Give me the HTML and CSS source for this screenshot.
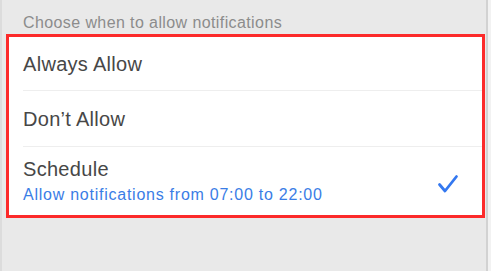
FILE: index.html
```html
<!DOCTYPE html>
<html>
<head>
<meta charset="utf-8">
<link rel="stylesheet" href="styles.css">
</head>
<body>
<div class="screen">
  <div class="edge"></div>
  <div class="main">
    <div class="header">Choose when to allow notifications</div>
    <div class="card">
      <div class="row row-first">
        <span class="title">Always Allow</span>
      </div>
      <div class="row">
        <span class="title">Don’t Allow</span>
      </div>
      <div class="row row-last">
        <div class="texts">
          <span class="title">Schedule</span>
          <span class="sub">Allow notifications from 07:00 to 22:00</span>
        </div>
        <svg class="check" width="22" height="20" viewBox="0 0 22 20">
          <path d="M2.5 10.5 L8 17 L19.5 2.5" fill="none" stroke="#3478f0" stroke-width="2.8" stroke-linecap="round" stroke-linejoin="round"/>
        </svg>
      </div>
    </div>
  </div>
  <div class="scroll"></div>
</div>
</body>
</html>
```
FILE: styles.css
```css
html, body {
  margin: 0;
  padding: 0;
}
body {
  background: #e9e9e9;
  font-family: "Liberation Sans", Arial, sans-serif;
}
.screen {
  display: flex;
  width: 491px;
  height: 271px;
  background: #e9e9e9;
}
.edge {
  width: 2px;
  background: #dcdcdc;
  flex: none;
}
.main {
  width: 479px;
  padding-left: 4px;
  padding-right: 1px;
  flex: none;
}
.header {
  padding: 13px 0 1px 17px;
  font-size: 16px;
  line-height: 20px;
  letter-spacing: 0.4px;
  color: #8c8c8c;
}
.card {
  border: 3px solid #fc2a2a;
  background: #ffffff;
  width: 473px;
}
.row {
  margin-left: 14px;
  border-top: 1px solid #eeeeee;
  display: flex;
  align-items: center;
  height: 55px;
}
.row-first {
  border-top: none;
  height: 53px;
}
.row-last {
  height: 68px;
  justify-content: space-between;
  padding-right: 23px;
}
.title {
  font-size: 20px;
  line-height: 24px;
  letter-spacing: 0.3px;
  color: #474747;
}
.texts {
  display: flex;
  flex-direction: column;
}
.sub {
  font-size: 16px;
  line-height: 20px;
  letter-spacing: 0.75px;
  color: #3a7de6;
  margin-top: 4px;
}
.check {
  display: block;
  margin-top: 6px;
}
.scroll {
  width: 2px;
  background: #d2d2d2;
  flex: none;
}
.screen::after {
  content: "";
  display: block;
  width: 3px;
  background: #f2f2f2;
  flex: none;
}
```
